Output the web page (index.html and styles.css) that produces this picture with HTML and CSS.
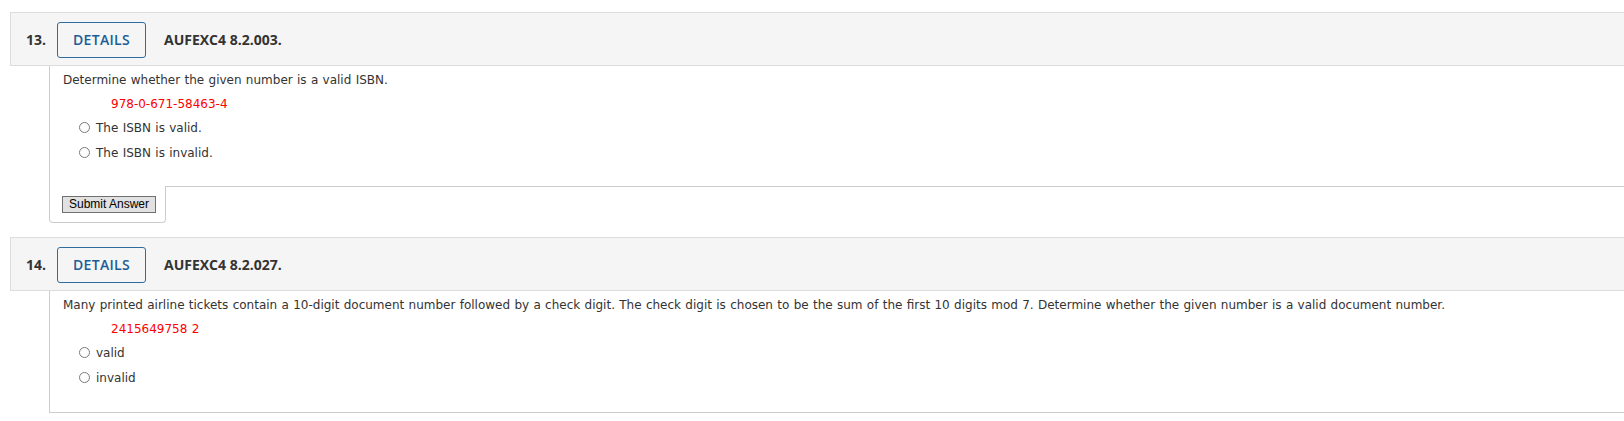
FILE: index.html
```html
<!DOCTYPE html>
<html lang="en">
<head>
<meta charset="utf-8">
<title>Questions</title>
<link rel="stylesheet" href="styles.css">
</head>
<body>
<div class="page">
  <section class="question">
    <div class="q-head">
      <span class="q-num">13.</span>
      <button class="details-btn" type="button">DETAILS</button>
      <span class="q-title">AUFEXC4 8.2.003.</span>
    </div>
    <div class="q-body q-body-tabbed">
      <div class="q-content">
        <p class="q-text">Determine whether the given number is a valid ISBN.</p>
        <div class="q-value">978-0-671-58463-4</div>
        <ul class="choices">
          <li class="choice"><input type="radio" name="q13" class="radio"><span>The ISBN is valid.</span></li>
          <li class="choice"><input type="radio" name="q13" class="radio"><span>The ISBN is invalid.</span></li>
        </ul>
      </div>
      <div class="q-foot">
        <div class="tab"><button class="submit-btn" type="button">Submit Answer</button></div>
        <div class="tab-rest"></div>
      </div>
    </div>
  </section>

  <section class="question question-next">
    <div class="q-head">
      <span class="q-num">14.</span>
      <button class="details-btn" type="button">DETAILS</button>
      <span class="q-title">AUFEXC4 8.2.027.</span>
    </div>
    <div class="q-body q-body-closed">
      <div class="q-content">
        <p class="q-text">Many printed airline tickets contain a 10-digit document number followed by a check digit. The check digit is chosen to be the sum of the first 10 digits mod 7. Determine whether the given number is a valid document number.</p>
        <div class="q-value">2415649758 2</div>
        <ul class="choices">
          <li class="choice"><input type="radio" name="q14" class="radio"><span>valid</span></li>
          <li class="choice"><input type="radio" name="q14" class="radio"><span>invalid</span></li>
        </ul>
      </div>
    </div>
  </section>
</div>
</body>
</html>
```

FILE: styles.css
```css
html, body {
  margin: 0;
  padding: 0;
  background: #ffffff;
}

body {
  font-family: "DejaVu Sans", Verdana, sans-serif;
  font-size: 12px;
  color: #333333;
}

.page {
  padding: 12px 0 0 10px;
}

.question-next {
  margin-top: 14px;
}

.q-head {
  display: flex;
  align-items: center;
  height: 52px;
  background: #f5f5f5;
  border: 1px solid #dcdcdc;
  border-right: none;
  padding-left: 15px;
  font-family: "Open Sans", "Liberation Sans", sans-serif;
}

.q-num {
  width: 31px;
  font-size: 14px;
  font-weight: 700;
  color: #333333;
}

.details-btn {
  box-sizing: border-box;
  width: 89px;
  height: 36px;
  margin: 1px 0 0 0;
  padding: 0;
  background: transparent;
  border: 1px solid #2f6b9c;
  border-radius: 3px;
  font-family: "Open Sans", "Liberation Sans", sans-serif;
  font-size: 14px;
  font-weight: 600;
  letter-spacing: 0.3px;
  color: #1c5d97;
}

.q-title {
  margin-left: 18px;
  font-size: 14px;
  font-weight: 700;
  color: #333333;
}

.q-body {
  margin-left: 39px;
}

.q-content {
  border-left: 1px solid #cccccc;
  padding: 4px 0 22px 13px;
  word-spacing: 0.5px;
}

.q-body-closed .q-content {
  border-bottom: 1px solid #cccccc;
}

.q-body-tabbed .q-content {
  padding-bottom: 21px;
}

.q-text {
  margin: 0 0 4px 0;
  line-height: 20px;
}

.q-value {
  padding-left: 48px;
  line-height: 20px;
  color: #ff0000;
}

.choices {
  list-style: none;
  margin: 1px 0 0 0;
  padding: 0 0 0 16px;
}

.choice {
  display: flex;
  align-items: center;
  height: 25px;
}

.radio {
  appearance: none;
  -webkit-appearance: none;
  box-sizing: border-box;
  width: 11px;
  height: 11px;
  margin: 0 6px 0 0;
  border: 1px solid #7a7a7a;
  border-radius: 50%;
  background: #ffffff;
}

.q-foot {
  display: flex;
}

.tab {
  box-sizing: border-box;
  width: 117px;
  padding: 10px 0 9px 12px;
  border: 1px solid #cccccc;
  border-top: none;
  border-radius: 0 0 4px 4px;
}

.submit-btn {
  display: block;
  box-sizing: border-box;
  height: 17px;
  margin: 0;
  padding: 0 6px;
  background: #e1e1e1;
  border: 1px solid #707070;
  border-radius: 0;
  font-family: "Liberation Sans", Arial, sans-serif;
  font-size: 12px;
  line-height: 15px;
  color: #000000;
}

.tab-rest {
  flex: 1;
  border-top: 1px solid #cccccc;
}
```
